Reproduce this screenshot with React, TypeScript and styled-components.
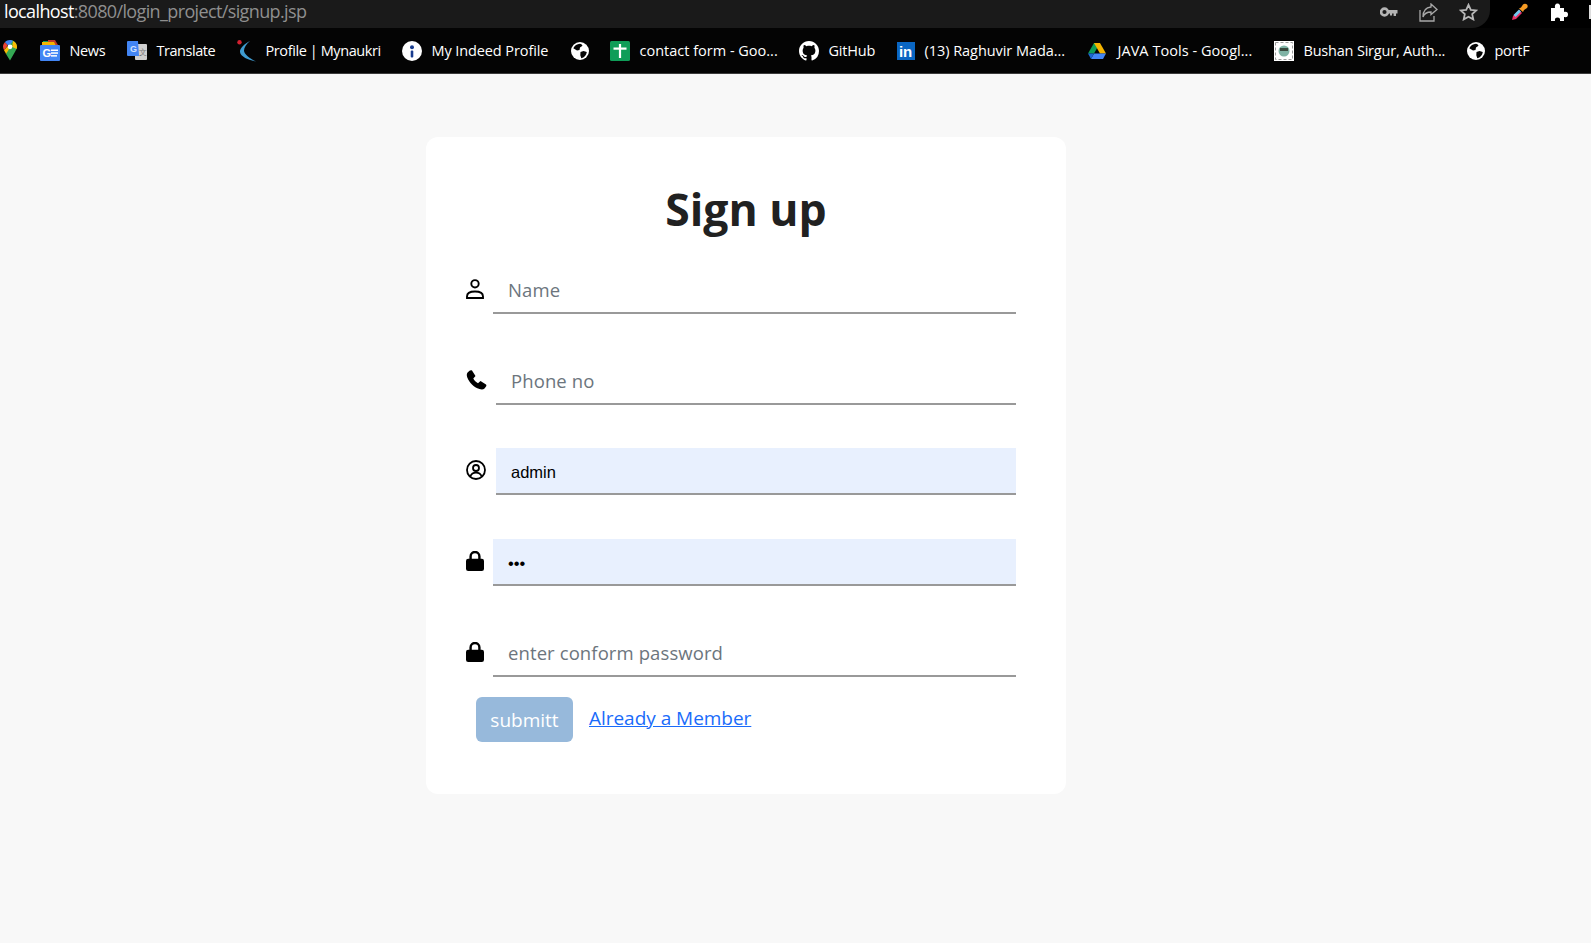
import React from "react";
import styled, { createGlobalStyle } from "styled-components";

const GlobalStyle = createGlobalStyle`
  html, body {
    margin: 0;
    padding: 0;
    background: #f8f8f8;
    font-family: "Open Sans", "Noto Sans", "Liberation Sans", sans-serif;
  }
`;

const Page = styled.div`
  width: 1591px;
  height: 943px;
  overflow: hidden;
  background: #f8f8f8;
`;

const TopBar = styled.div`
  display: flex;
  align-items: center;
  height: 28px;
  background: #000;
`;

const Omnibox = styled.div`
  display: flex;
  align-items: center;
  justify-content: space-between;
  box-sizing: border-box;
  width: 1490px;
  height: 28px;
  padding: 0 12px 0 4px;
  background: #1a1a1a;
  border-bottom-right-radius: 18px;
`;

const Url = styled.div`
  font-size: 18px;
  letter-spacing: -0.63px;
  line-height: 24px;
  color: #8f8f8f;
  margin-top: -6px;

  b {
    font-weight: 400;
    color: #fff;
  }
`;

const BoxActions = styled.div`
  display: flex;
  align-items: center;
  gap: 21px;
  margin-top: -4px;
`;

const Extensions = styled.div`
  display: flex;
  align-items: center;
  margin-left: 21px;
  gap: 22px;
  margin-top: -4px;
`;

const Sliver = styled.div`
  width: 2px;
  height: 14px;
  margin-left: -1px;
  background: #ddd;
`;

const Bookmarks = styled.div`
  display: flex;
  align-items: center;
  box-sizing: border-box;
  height: 46px;
  padding-left: 3px;
  background: #040404;
  border-bottom: 1px solid #3c3c3c;
`;

const Bookmark = styled.div<{ $w: number; $ls?: number }>`
  display: flex;
  align-items: center;
  gap: 9.5px;
  flex: none;
  width: ${(p) => p.$w}px;
  font-size: 14.5px;
  letter-spacing: ${(p) => p.$ls ?? -0.35}px;
  color: #fff;
  white-space: nowrap;
  font-family: "Open Sans", "Noto Sans", sans-serif;

  svg {
    flex: none;
  }
`;

const Card = styled.div`
  display: flex;
  flex-direction: column;
  box-sizing: border-box;
  width: 640px;
  height: 657px;
  margin: 63px 0 0 426px;
  padding: 0 50px 0 40px;
  background: #fff;
  border-radius: 12px;
`;

const Title = styled.h1`
  margin: 43px 0 0 10px;
  text-align: center;
  font-size: 44.5px;
  line-height: 58px;
  font-weight: 700;
  color: #212121;
`;

const Fields = styled.div`
  display: flex;
  flex-direction: column;
  gap: 43.7px;
  margin-top: 29px;
`;

const Row = styled.div`
  display: flex;
  align-items: flex-start;
  gap: 9px;
`;

const IconSlot = styled.div<{ $w: number }>`
  flex: none;
  display: flex;
  width: ${(p) => p.$w}px;
  margin-top: 12px;
`;

const Field = styled.input<{ $filled?: boolean }>`
  flex: 1;
  min-width: 0;
  box-sizing: border-box;
  height: 47px;
  padding: ${(p) => (p.$filled ? "4px 15px 0" : "0 15px")};
  border: 0;
  border-bottom: 2px solid #999;
  border-radius: 0;
  outline: none;
  background: ${(p) => (p.$filled ? "#e8f0fe" : "#fff")};
  color: #000;
  font-family: ${(p) => (p.$filled ? '"Liberation Sans", Arial, sans-serif' : '"Open Sans", "Noto Sans", sans-serif')};
  font-size: ${(p) => (p.$filled ? "16.5px" : "18.5px")};

  &::placeholder {
    color: #6c757d;
    opacity: 1;
    letter-spacing: 0.1px;
  }
`;

const Actions = styled.div`
  display: flex;
  align-items: flex-start;
  gap: 16px;
  margin: 20px 0 0 10px;
`;

const SubmitButton = styled.button`
  width: 97px;
  height: 45px;
  padding: 2px 0 0;
  border: 0;
  border-radius: 6px;
  background: #97b9db;
  color: #fff;
  font-family: "Open Sans", "Noto Sans", sans-serif;
  font-size: 19px;
  line-height: 43px;
`;

const MemberLink = styled.a`
  margin-top: 8px;
  color: #1a6bfa;
  font-size: 19px;
  line-height: 27px;
  letter-spacing: -0.03px;
  text-decoration: underline;
`;

const KeyIcon = () => (
  <svg width="18" height="12" viewBox="0 0 18 12">
    <circle cx="4.5" cy="6" r="3.4" fill="none" stroke="#b4b4b4" strokeWidth="2.6" />
    <path d="M8 4h9.500v3.500H16V10h-2.400V7.500h-1.500V9.600H10V7.500H8z" fill="#b4b4b4" />
  </svg>
);

const ShareIcon = () => (
  <svg width="19" height="19" viewBox="0 0 19 19" fill="none" stroke="#a8a8a8" strokeWidth="1.300">
    <path d="M1 7v11h14v-5" />
    <path d="M12 1l6 5.500-6 5V9C8 9 5.500 10 4 14c0-6 3-9.500 8-10z" />
  </svg>
);

const StarIcon = () => (
  <svg width="19" height="18" viewBox="0 0 19 18" fill="none" stroke="#b8b8b8" strokeWidth="1.800">
    <path d="M9.500 1.800l2.300 5 5.400.6-4 3.700 1.100 5.300-4.800-2.700-4.800 2.700 1.100-5.300-4-3.700 5.400-.6z" />
  </svg>
);

const DropperIcon = () => (
  <svg width="17" height="18" viewBox="0 0 17 18">
    <path d="M1 17l1-4 6-6 3 3-6 6z" fill="#e8336b" />
    <path d="M2.500 12l5.500-5.500 2 2-5.500 5.500z" fill="#6fc8f0" />
    <path d="M8 5.500l2-1 2-3c1-1 3-1 4 0s.8 2.500 0 3.500l-3 2-1 2z" fill="#f59a23" />
  </svg>
);

const PuzzleIcon = () => (
  <svg width="18" height="18" viewBox="0 0 18 18">
    <path d="M1 5h4c-.6-3 .6-4.500 2.500-4.500S10.600 2 10 5h4v4c3-.6 4 .7 4 2.500S17 14.600 14 14v4h-4c.5-2.500-.7-3.500-2.500-3.500S4.500 15.500 5 18H1z" fill="#fff" />
  </svg>
);

const MapsIcon = () => (
  <svg width="14" height="21" viewBox="0 0 14 21">
    <path d="M7 0c3.900 0 7 3 7 6.800 0 2-.9 3.300-1.800 4.600L7 20.500 3 14z" fill="#34a853" />
    <path d="M7 0C5 0 3.100.9 1.800 2.300l3 3L7 4.500l3-3.500C9 .4 8 0 7 0z" fill="#4285f4" />
    <path d="M10 1c2.400 1.100 4 3.300 4 5.800 0 .8-.2 1.500-.4 2.200L9.200 7z" fill="#fbbc04" />
    <path d="M1.800 2.300C.7 3.500 0 5 0 6.800c0 1.300.5 2.500 1.100 3.500l3.700-5z" fill="#ea4335" />
    <path d="M1 10.200c.6 1.100 1.400 2 2 3.800l3-4.800-1.500-3z" fill="#fbbc04" />
    <circle cx="7" cy="6.800" r="2.400" fill="#fff" />
  </svg>
);

const NewsIcon = () => (
  <svg width="20" height="21" viewBox="0 0 20 21">
    <path d="M3 1h11l2 4H3z" fill="#0f9d58" />
    <path d="M8 0h7l3 5H8z" fill="#c0392b" />
    <path d="M2 2h12l2 4H2z" fill="#f4b400" />
    <rect x="0" y="5" width="20" height="16" rx="1" fill="#4285f4" />
    <text x="2.500" y="17" fontFamily="Liberation Sans, sans-serif" fontWeight="700" fontSize="11" fill="#fff">G</text>
    <rect x="11" y="9.500" width="7" height="1.500" fill="#fff" />
    <rect x="11" y="12.300" width="7" height="1.500" fill="#fff" />
    <rect x="11" y="15.100" width="6" height="1.500" fill="#fff" />
  </svg>
);

const TranslateIcon = () => (
  <svg width="20" height="20" viewBox="0 0 20 20">
    <rect x="8" y="3" width="12" height="16" rx="1" fill="#d0d0d0" />
    <text x="12" y="14" fontFamily="Liberation Sans, sans-serif" fontSize="8" fill="#777">文</text>
    <path d="M1 0h10l1 15H1a1 1 0 0 1-1-1V1a1 1 0 0 1 1-1z" fill="#4285f4" />
    <text x="3" y="11" fontFamily="Liberation Sans, sans-serif" fontWeight="700" fontSize="9" fill="#cfe0fc">G</text>
  </svg>
);

const NaukriIcon = () => (
  <svg width="19" height="22" viewBox="0 0 19 22" fill="none">
    <circle cx="2.500" cy="2.200" r="2.200" fill="#d3202f" />
    <path d="M13 1C9.500 4 7 7.500 7 10.500c0 3.500 5 7.500 12 11C11 20 3.500 16.500 3 12c-.4-4 5-8.500 10-11z" fill="#3f9bd0" />
  </svg>
);

const IndeedIcon = () => (
  <svg width="20" height="20" viewBox="0 0 20 20">
    <circle cx="10" cy="10" r="10" fill="#fff" />
    <circle cx="10" cy="6.300" r="2" fill="#1a3d8f" />
    <rect x="8.700" y="9.500" width="2.600" height="7" rx="1" fill="#1a3d8f" />
  </svg>
);

const GlobeIcon = () => (
  <svg width="18" height="18" viewBox="0 0 18 18">
    <circle cx="9" cy="9" r="9" fill="#fff" />
    <path d="M9 1.800C6 2 3.500 3.700 2.300 6.200L6 8.500l2.500-.5.500-2.500 2.500-1.800C11 2.500 10 2 9 1.800zM9.500 10l3-1 3.300 1c-.4 3.200-2.500 5.700-5.500 6.300l-1-3z" fill="#050505" />
  </svg>
);

const FormsIcon = () => (
  <svg width="20" height="20" viewBox="0 0 20 20">
    <rect width="20" height="20" rx="1.500" fill="#0f9d58" />
    <rect x="8.900" y="3" width="2.200" height="14" fill="#fff" />
    <rect x="3.500" y="6.500" width="13" height="2.200" fill="#fff" />
  </svg>
);

const GithubIcon = () => (
  <svg width="20" height="20" viewBox="0 0 16 16">
    <path
      fill="#fff"
      d="M8 0C3.580 0 0 3.580 0 8c0 3.540 2.290 6.530 5.470 7.590.4.070.55-.17.55-.38 0-.19-.01-.82-.01-1.490-2.010.37-2.530-.49-2.690-.94-.09-.23-.48-.94-.82-1.130-.28-.15-.68-.52-.01-.53.63-.01 1.080.58 1.230.82.720 1.210 1.870.87 2.330.66.070-.52.280-.87.510-1.070-1.780-.2-3.640-.89-3.640-3.950 0-.87.310-1.590.820-2.150-.08-.2-.36-1.020.08-2.120 0 0 .67-.21 2.200.82.640-.18 1.320-.27 2-.27s1.360.09 2 .27c1.530-1.040 2.200-.82 2.200-.82.440 1.100.16 1.920.08 2.120.51.56.82 1.270.82 2.150 0 3.070-1.870 3.750-3.650 3.950.29.25.54.73.54 1.480 0 1.070-.01 1.930-.01 2.200 0 .21.15.46.55.38A8.010 8.010 0 0 0 16 8c0-4.420-3.580-8-8-8z"
    />
  </svg>
);

const LinkedinIcon = () => (
  <svg width="18" height="18" viewBox="0 0 18 18">
    <rect width="18" height="18" fill="#0a66c2" />
    <text x="2" y="15" fontFamily="Liberation Sans, sans-serif" fontWeight="700" fontSize="15" fill="#fff">in</text>
  </svg>
);

const DriveIcon = () => (
  <svg width="20" height="16" viewBox="0 0 20 16">
    <path d="M6 0h6l-6 10.500H0z" fill="#0f9d58" />
    <path d="M6 0h6l6 10.500h-6z" fill="#f4b400" />
    <path d="M3 16h12l3-5.500H6z" fill="#4285f4" />
    <path d="M0 10.500h6L3 16z" fill="#1967d2" />
  </svg>
);

const BushanIcon = () => (
  <svg width="20" height="20" viewBox="0 0 20 20">
    <rect width="20" height="20" fill="#fff" />
    <rect x="1.500" y="1.500" width="17" height="17" fill="none" stroke="#9a9a9a" strokeDasharray="3 2" />
    <circle cx="10" cy="10" r="5.500" fill="#7fb3a5" />
    <rect x="6" y="7" width="8" height="3" fill="#3a4a3f" />
  </svg>
);

const PersonOutline = () => (
  <svg width="18" height="20" viewBox="0 0 18 20" fill="none" stroke="#000" strokeWidth="1.900">
    <circle cx="9" cy="4.800" r="3.700" />
    <path d="M1 19v-1.500c0-3.500 3.800-5 8-5s8 1.500 8 5V19z" />
  </svg>
);

const PhoneSolid = () => (
  <svg width="21" height="20" viewBox="0 0 20 20">
    <path d="M5.500.5L9 6 6.800 8.500c1 2 2.700 3.700 4.700 4.700l2.500-2.200 5.500 3.500c.5.500.5 1.500 0 2l-1.500 2c-1 1-3 1.300-5 .5C7 17 3 13 .8 7.500.1 5.500.1 3.500 1.100 2.500L3 .7c.7-.6 1.900-.7 2.500-.2z" fill="#000" />
  </svg>
);

const AccountCircle = () => (
  <svg width="20" height="20" viewBox="0 0 20 20" fill="none" stroke="#000" strokeWidth="1.800">
    <circle cx="10" cy="10" r="9" />
    <circle cx="10" cy="8" r="3" />
    <path d="M4.300 16.500c1-2.500 3.300-3.800 5.700-3.800s4.700 1.300 5.700 3.800" />
  </svg>
);

const LockSolid = () => (
  <svg width="18" height="20" viewBox="0 0 18 20">
    <path d="M4.600 9V5.400a4.400 4.400 0 0 1 8.800 0V9" fill="none" stroke="#000" strokeWidth="2.400" />
    <rect y="7.800" width="18" height="12.200" rx="2.200" fill="#000" />
  </svg>
);

const App: React.FC = () => {
  return (
    <Page>
      <GlobalStyle />
      <TopBar>
        <Omnibox>
          <Url>
            <b>localhost</b>:8080/login_project/signup.jsp
          </Url>
          <BoxActions>
            <KeyIcon />
            <ShareIcon />
            <StarIcon />
          </BoxActions>
        </Omnibox>
        <Extensions>
          <DropperIcon />
          <PuzzleIcon />
          <Sliver />
        </Extensions>
      </TopBar>
      <Bookmarks>
        <Bookmark $w={37}><MapsIcon /></Bookmark>
        <Bookmark $w={87}><NewsIcon />News</Bookmark>
        <Bookmark $w={110} $ls={-0.45}><TranslateIcon />Translate</Bookmark>
        <Bookmark $w={165} $ls={-0.4}><NaukriIcon />Profile | Mynaukri</Bookmark>
        <Bookmark $w={169} $ls={-0.1}><IndeedIcon />My Indeed Profile</Bookmark>
        <Bookmark $w={39}><GlobeIcon /></Bookmark>
        <Bookmark $w={189} $ls={0}><FormsIcon />contact form - Goo...</Bookmark>
        <Bookmark $w={98} $ls={-0.2}><GithubIcon />GitHub</Bookmark>
        <Bookmark $w={191} $ls={-0.05}><LinkedinIcon />(13) Raghuvir Mada...</Bookmark>
        <Bookmark $w={186} $ls={0.05}><DriveIcon />JAVA Tools - Googl...</Bookmark>
        <Bookmark $w={193} $ls={-0.2}><BushanIcon />Bushan Sirgur, Auth...</Bookmark>
        <Bookmark $w={70} $ls={-0.25}><GlobeIcon />portF</Bookmark>
      </Bookmarks>
      <Card>
        <Title>Sign up</Title>
        <Fields>
          <Row>
            <IconSlot $w={18}><PersonOutline /></IconSlot>
            <Field placeholder="Name" />
          </Row>
          <Row>
            <IconSlot $w={21}><PhoneSolid /></IconSlot>
            <Field placeholder="Phone no" />
          </Row>
          <Row>
            <IconSlot $w={21}><AccountCircle /></IconSlot>
            <Field $filled defaultValue="admin" />
          </Row>
          <Row>
            <IconSlot $w={18}><LockSolid /></IconSlot>
            <Field $filled type="password" defaultValue="abc" />
          </Row>
          <Row>
            <IconSlot $w={18}><LockSolid /></IconSlot>
            <Field placeholder="enter conform password" />
          </Row>
        </Fields>
        <Actions>
          <SubmitButton>submitt</SubmitButton>
          <MemberLink href="#">Already a Member</MemberLink>
        </Actions>
      </Card>
    </Page>
  );
};

export default App;
